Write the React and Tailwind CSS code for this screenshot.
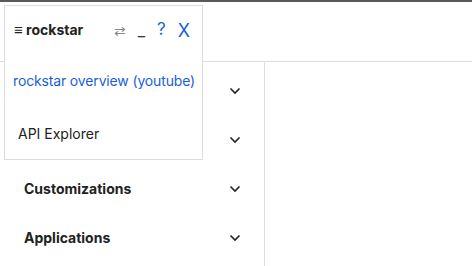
import React from "react";

// first two rows sit under the floating panel, only their chevrons show
const sections = [
  { label: "", hidden: true },
  { label: "", hidden: true },
  { label: "Customizations" },
  { label: "Applications" },
];

function Chevron() {
  return (
    <svg width="12" height="8" viewBox="0 0 12 8" fill="none" stroke="#222" strokeWidth="1.6">
      <path d="M1.5 1.5 L6 6 L10.5 1.5" />
    </svg>
  );
}

export default function App() {
  return (
    <div className="relative w-[472px] h-[266px] overflow-hidden bg-white font-['Inter',Arial,sans-serif] text-[#222]">
      <div className="h-[2px] bg-[#5a5a5a]" />
      <div className="h-[60px] border-b border-[#ddd]" />
      <div className="flex h-[204px]">
        <div className="w-[265px] border-r border-[#ddd] pt-[4px]">
          {sections.map((s, i) => (
            <div key={i} className="flex items-center justify-between h-[49px] pl-[24px] pr-[23px]">
              <span className="text-[14px] font-bold">{s.label}</span>
              <Chevron />
            </div>
          ))}
        </div>
      </div>

      <div className="absolute left-[4px] top-[5px] w-[199px] h-[155px] border border-[#ddd] bg-white">
        <div className="flex items-center h-[48px] pl-[9px] pr-[12px]">
          <span className="text-[14px] font-bold">
            <span className="font-black text-[15px]">≡</span> rockstar
          </span>
          <div className="ml-auto flex items-center gap-[12px]">
            <span className="text-[14px] text-[#888]">⇄</span>
            <span className="text-[16px] text-[#333]">_</span>
            <span className="text-[17px] text-[#1a5fd6]">?</span>
            <span className="text-[18px] text-[#1a5fd6]">X</span>
          </div>
        </div>
        <div className="h-[52px] flex items-center pl-[8px]">
          <span className="text-[14px] tracking-[-0.15px] text-[#1a5fd6]">rockstar overview (youtube)</span>
        </div>
        <div className="h-[55px] flex items-center pl-[13px]">
          <span className="text-[14px]">API Explorer</span>
        </div>
      </div>
    </div>
  );
}
